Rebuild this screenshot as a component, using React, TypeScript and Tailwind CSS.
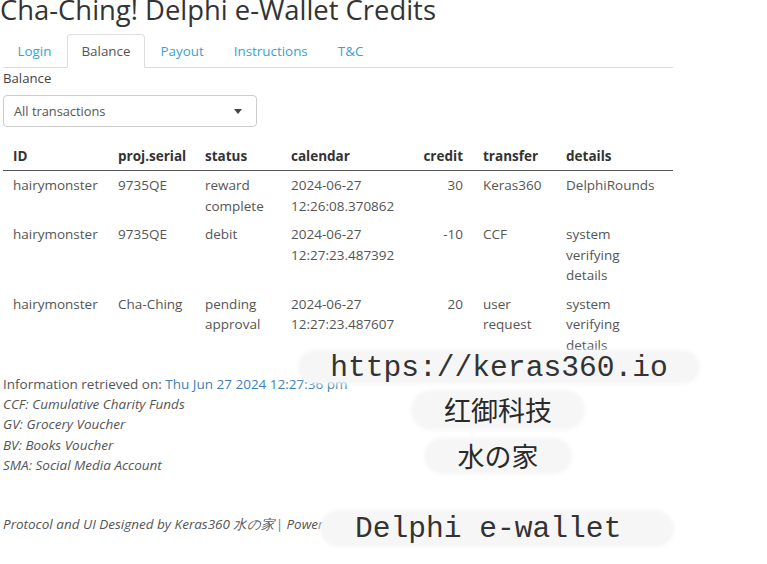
import { useState } from 'react'

const tabs = ['Login', 'Balance', 'Payout', 'Instructions', 'T&C']

const rows = [
  {
    id: 'hairymonster',
    serial: '9735QE',
    status: ['reward', 'complete'],
    calendar: ['2024-06-27', '12:26:08.370862'],
    credit: '30',
    transfer: ['Keras360'],
    details: ['DelphiRounds'],
  },
  {
    id: 'hairymonster',
    serial: '9735QE',
    status: ['debit'],
    calendar: ['2024-06-27', '12:27:23.487392'],
    credit: '-10',
    transfer: ['CCF'],
    details: ['system', 'verifying', 'details'],
  },
  {
    id: 'hairymonster',
    serial: 'Cha-Ching',
    status: ['pending', 'approval'],
    calendar: ['2024-06-27', '12:27:23.487607'],
    credit: '20',
    transfer: ['user', 'request'],
    details: ['system', 'verifying', 'details'],
  },
]

const legend = [
  'CCF: Cumulative Charity Funds',
  'GV: Grocery Voucher',
  'BV: Books Voucher',
  'SMA: Social Media Account',
]

function Lines({ items }: { items: string[] }) {
  return (
    <>
      {items.map((t, i) => (
        <div key={i}>{t}</div>
      ))}
    </>
  )
}

export default function App() {
  const [tab, setTab] = useState('Balance')

  return (
    <div className="relative w-[767px] h-[564px] overflow-hidden bg-white font-['Open_Sans',sans-serif] text-[13.5px] text-[#555]">
      <div className="w-[673px] pl-[3px]">
        <h1 className="-mt-[4px] -ml-[3px] text-[27.4px] leading-[27px] font-normal text-[#333] whitespace-nowrap">
          Cha-Ching! Delphi e-Wallet Credits
        </h1>

        <ul className="mt-[11px] flex border-b border-[#ddd] text-[13.4px]">
          {tabs.map((t) => (
            <li key={t} className="mr-[1px] -mb-px">
              <button
                onClick={() => setTab(t)}
                className={
                  t === tab
                    ? 'block px-[13.5px] py-[6px] leading-[20px] border border-[#ddd] border-b-white rounded-t-[4px] bg-white text-[#555]'
                    : 'block px-[13.5px] py-[6px] leading-[20px] border border-transparent text-[#3b9fd1]'
                }
              >
                {t}
              </button>
            </li>
          ))}
        </ul>

        <div className="text-[13.2px] leading-[20px] text-[#444]">Balance</div>

        <div className="mt-[7px] w-[254px] h-[32px] flex items-center justify-between pl-[10px] pr-[14px] pt-[2px] border border-[#ccc] rounded-[4px] text-[12.8px] text-[#555]">
          <span>All transactions</span>
          <svg width="8" height="5" viewBox="0 0 8 5" className="-mt-[2px]">
            <path d="M0 0h8L4 5z" fill="#444" />
          </svg>
        </div>

        <table className="mt-[15px] w-[670px] table-fixed border-collapse leading-[20.5px]">
          <colgroup>
            <col className="w-[105px]" />
            <col className="w-[87px]" />
            <col className="w-[86px]" />
            <col className="w-[122px]" />
            <col className="w-[70px]" />
            <col className="w-[83px]" />
            <col className="w-[117px]" />
          </colgroup>
          <thead>
            <tr className="border-b border-[#555] text-[#333] font-semibold">
              <th className="text-left px-[10px] py-[4px] leading-[20px]">ID</th>
              <th className="text-left px-[10px] py-[4px] leading-[20px]">proj.serial</th>
              <th className="text-left px-[10px] py-[4px] leading-[20px]">status</th>
              <th className="text-left px-[10px] py-[4px] leading-[20px]">calendar</th>
              <th className="text-right px-[10px] py-[4px] leading-[20px]">credit</th>
              <th className="text-left px-[10px] py-[4px] leading-[20px]">transfer</th>
              <th className="text-left px-[10px] py-[4px] leading-[20px]">details</th>
            </tr>
          </thead>
          <tbody>
            {rows.map((r, i) => (
              <tr key={i} className="align-top">
                <td className="px-[10px] py-[4px]">{r.id}</td>
                <td className="px-[10px] py-[4px]">{r.serial}</td>
                <td className="px-[10px] py-[4px]"><Lines items={r.status} /></td>
                <td className="px-[10px] py-[4px] whitespace-nowrap"><Lines items={r.calendar} /></td>
                <td className="px-[10px] py-[4px] text-right">{r.credit}</td>
                <td className="px-[10px] py-[4px]"><Lines items={r.transfer} /></td>
                <td className="px-[10px] py-[4px]"><Lines items={r.details} /></td>
              </tr>
            ))}
          </tbody>
        </table>

        <div className="mt-[15px] leading-[20px] text-[#555]">
          Information retrieved on: <span className="text-[#3f7fb5]">Thu Jun 27 2024 12:27:36 pm</span>
        </div>
        <div className="italic leading-[20.33px] text-[#555]">
          {legend.map((l) => (
            <div key={l}>{l}</div>
          ))}
        </div>

        <div className="mt-[39px] italic leading-[20px] text-[#555] whitespace-nowrap">
          Protocol and UI Designed by Keras360 水の家<span className="text-[#3f7fb5]">|</span> Powered by Delphi
        </div>
      </div>

      {/* watermark pills over the page */}
      <div className="absolute left-[300px] top-[352px] w-[398px] h-[30px] flex items-center justify-center pt-[2px] rounded-full bg-[#f6f6f6] shadow-[0_0_4px_2px_#f6f6f6] font-['Liberation_Mono',monospace] text-[29.6px] text-[#333]">
        https://keras360.io
      </div>
      <div className="absolute left-[413px] top-[392px] w-[170px] h-[36px] flex items-center justify-center rounded-full bg-[#f6f6f6] shadow-[0_0_4px_2px_#f6f6f6] font-['Noto_Sans_CJK_SC',sans-serif] text-[27px] text-[#2a2a2a]">
        红御科技
      </div>
      <div className="absolute left-[426px] top-[440px] w-[144px] h-[32px] flex items-center justify-center rounded-full bg-[#f6f6f6] shadow-[0_0_4px_2px_#f6f6f6] font-['Noto_Sans_CJK_JP',sans-serif] text-[27px] text-[#2a2a2a]">
        水の家
      </div>
      <div className="absolute left-[322px] top-[512px] w-[350px] h-[33px] flex items-center pl-[33px] pt-[2px] rounded-full bg-[#f6f6f6] shadow-[0_0_4px_2px_#f6f6f6] font-['Liberation_Mono',monospace] text-[29.6px] text-[#333]">
        Delphi e-wallet
      </div>
    </div>
  )
}
